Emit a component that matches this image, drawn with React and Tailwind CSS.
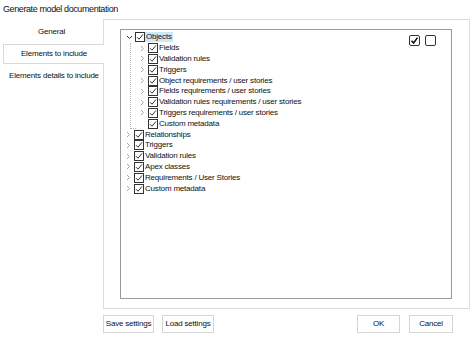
import React from 'react';

const Check = ({ checked = true }) => (
  <span className="w-[10px] h-[10px] border border-[#333] bg-white flex items-center justify-center shrink-0">
    {checked && (
      <svg width="8" height="8" viewBox="0 0 8 8">
        <path d="M1 4.2 L3 6.2 L7 1.4" fill="none" stroke="#333" strokeWidth="1" />
      </svg>
    )}
  </span>
);

const Chevron = ({ open }) => (
  <svg width="7" height="7" viewBox="0 0 7 7" className="shrink-0">
    {open ? (
      <path d="M1 2 L3.5 4.5 L6 2" fill="none" stroke="#333" strokeWidth="1" />
    ) : (
      <path d="M2 1 L4.5 3.5 L2 6" fill="none" stroke="#a6a6a6" strokeWidth="1" />
    )}
  </svg>
);

const Row = ({ label, indent, open, chevron = true, selected }) => (
  <div className="h-[10.8px] flex items-center" style={{ paddingLeft: indent }}>
    <span className="w-[9px] flex justify-center">{chevron && <Chevron open={open} />}</span>
    <span className="ml-[1px]"><Check /></span>
    <span className={'px-[1px] leading-[10px] whitespace-nowrap ' + (selected ? 'bg-[#cce8ff]' : '')}>{label}</span>
  </div>
);

const children = [
  'Fields',
  'Validation rules',
  'Triggers',
  'Object requirements / user stories',
  'Fields requirements / user stories',
  'Validation rules requirements / user stories',
  'Triggers requirements / user stories',
];

const topLevel = ['Relationships', 'Triggers', 'Validation rules', 'Apex classes', 'Requirements / User Stories', 'Custom metadata'];

export default function App() {
  return (
    <div className="w-[474px] h-[339px] bg-white text-[#111] text-[8px] tracking-[-0.2px] font-['Liberation_Sans',sans-serif] flex flex-col">
      <div className="h-[19px] pl-[3px] pt-[3px] text-[9px] tracking-[-0.4px]">Generate model documentation</div>
      <div className="flex h-[290px]">
        <div className="w-[103px] flex flex-col text-center shrink-0">
          <div className="h-[25px] flex items-center justify-center pt-[1px]">General</div>
          <div className="h-[20px] ml-[3px] -mr-px relative z-10 bg-white border border-r-0 border-[#d9d9d9] flex items-center justify-center">Elements to include</div>
          <div className="h-[24px] flex items-center justify-center pl-[5px]">Elements details to include</div>
        </div>
        <div className="w-[367px] border border-[#dcdcdc] pl-[16px] pr-[17px] pt-[9px] pb-[9px]">
          <div className="relative h-full border border-[#9a9a9a] pt-[2px] pl-[3px]">
            <div className="absolute left-[9px] top-[13px] w-[6px] h-[86px] border-l border-b border-dotted border-[#b5b5b5]" />
            <div className="absolute right-[15px] top-[5px] flex gap-[5px]">
              <span className="w-[11px] h-[11px] border border-[#333] rounded-[2px] flex items-center justify-center">
                <svg width="9" height="9" viewBox="0 0 9 9">
                  <path d="M1.5 4.8 L3.6 7 L7.5 1.6" fill="none" stroke="#111" strokeWidth="1.6" />
                </svg>
              </span>
              <span className="w-[11px] h-[11px] border border-[#333] rounded-[2px]" />
            </div>
            <Row label="Objects" indent={1} open selected />
            {children.map((c) => (
              <Row key={c} label={c} indent={14} />
            ))}
            <Row label="Custom metadata" indent={14} chevron={false} />
            {topLevel.map((c) => (
              <Row key={c} label={c} indent={0} />
            ))}
          </div>
        </div>
      </div>
      <div className="flex items-start pt-[6px] pl-[103px] pr-[21px]">
        <button className="h-[18px] w-[51px] border border-[#d6d6d6] bg-white text-[8px]">Save settings</button>
        <button className="h-[18px] w-[52px] ml-[8px] border border-[#d6d6d6] bg-white text-[8px]">Load settings</button>
        <div className="flex-1" />
        <button className="h-[18px] w-[43px] border border-[#d6d6d6] bg-white text-[8px]">OK</button>
        <button className="h-[18px] w-[44px] ml-[9px] border border-[#d6d6d6] bg-white text-[8px]">Cancel</button>
      </div>
    </div>
  );
}
